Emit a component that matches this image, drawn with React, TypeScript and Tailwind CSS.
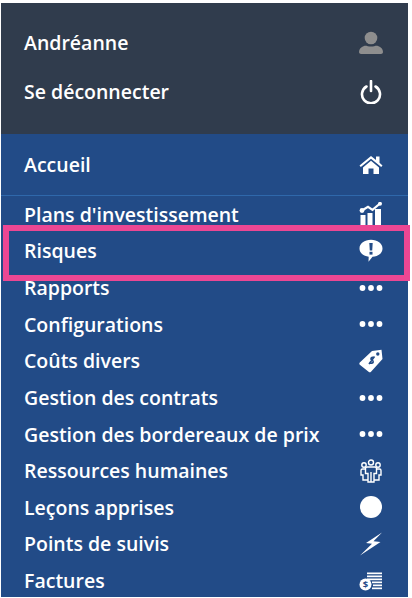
import type { ReactNode } from "react";

const Svg = ({ children }: { children: ReactNode }) => (
  <svg viewBox="0 0 24 24" className="w-6 h-6 shrink-0 text-white" fill="currentColor">
    {children}
  </svg>
);

const Dots = () => (
  <Svg>
    <circle cx="3.500" cy="12" r="2.900" />
    <circle cx="12" cy="12" r="2.900" />
    <circle cx="20.500" cy="12" r="2.900" />
  </Svg>
);

const UserIcon = () => (
  <svg viewBox="0 0 24 24" className="w-6 h-6 shrink-0 text-[#8e8e8e]" fill="currentColor">
    <circle cx="12" cy="7" r="6.300" />
    <path d="M0 21c0-3 2-5 5-6 2-.6 4 .6 7 .6s5-1.200 7-.6c3 1 5 3 5 6 0 1-1 2-2 2H2c-1 0-2-1-2-2z" />
  </svg>
);

const PowerIcon = () => (
  <Svg>
    <path d="M7.500 6.500a9 9 0 1 0 9 0" fill="none" stroke="currentColor" strokeWidth="2.600" strokeLinecap="round" />
    <path d="M12 1v10" fill="none" stroke="currentColor" strokeWidth="2.600" strokeLinecap="round" />
  </Svg>
);

const HomeIcon = () => (
  <Svg>
    <path d="M.5 12.500 12 3l5 4V3.500h3.500v6.300l3 2.700-1.300 1.500L12 5.700 1.800 14z" />
    <path d="M4 14.500 12 7.800l8 6.700V21h-5.500v-5.500h-5V21H4z" />
  </Svg>
);

const ChartIcon = () => (
  <Svg>
    <path d="M3 8.500 9 4.800l4.500 3L21 1.500" fill="none" stroke="currentColor" strokeWidth="2.200" />
    <circle cx="3" cy="8.500" r="2.400" />
    <circle cx="21" cy="1.800" r="2" />
    <rect x="1.500" y="13" width="5" height="11" />
    <rect x="8.500" y="11" width="5" height="13" />
    <rect x="16" y="7" width="6" height="17" />
  </Svg>
);

const RiskIcon = () => (
  <Svg>
    <path d="M12 .8c6.500 0 11.500 3.600 11.500 8.600 0 4.800-4.500 8.200-10 8.400L9.500 22.800l.2-5.100C4.200 17 .5 13.700.5 9.400.5 4.400 5.500.8 12 .8z" />
    <path d="M10.300 4h3.400l-.5 7.500h-2.400z" fill="#224b87" />
    <rect x="10.500" y="12.800" width="3" height="2.800" fill="#224b87" />
  </Svg>
);

const TagIcon = () => (
  <Svg>
    <path d="M.8 13.400 13 2l9.500-1.200L23.500 10 12 22.800c-.7.700-1.700.7-2.400 0L.8 15.700c-.6-.7-.6-1.600 0-2.300z" />
    <circle cx="18.800" cy="5" r="1.700" fill="#224b87" />
    <path d="M15 8.800c-1.500-1.100-3.300-.2-3 1.200.3 1.400 2.500 1.300 2.200 3-.3 1.300-2.200 1.600-3.700.5M15.500 7.500l-5.500 7.500" fill="none" stroke="#224b87" strokeWidth="1.600" />
  </Svg>
);

const TeamIcon = () => (
  <Svg>
    <g fill="none" stroke="currentColor" strokeWidth="1.400">
      <circle cx="12" cy="3.500" r="2.500" />
      <circle cx="5" cy="6" r="2.200" />
      <circle cx="19" cy="6" r="2.200" />
      <path d="M8 8h8c1 0 1.500.6 1.500 1.500v5H15v8.500H9v-8.500H6.500v-5C6.500 8.600 7 8 8 8z" />
      <path d="M6 10H3.500C2.500 10 2 10.600 2 11.500V16h2v5h5M18 10h2.500c1 0 1.500.6 1.500 1.500V16h-2v5h-5M12 13v10" />
    </g>
  </Svg>
);

const CircleIcon = () => (
  <Svg>
    <circle cx="12" cy="12" r="11" />
  </Svg>
);

const BoltIcon = () => (
  <Svg>
    <path d="M23 .5 7 11l6 .8L1 23.500 21.500 10l-7-.8z" />
  </Svg>
);

const MoneyIcon = () => (
  <Svg>
    <rect x="8" y="3.500" width="15" height="1.700" />
    <rect x="8" y="6.500" width="15" height="1.700" />
    <rect x="8" y="9.500" width="15" height="1.700" />
    <rect x="13" y="12.500" width="10" height="1.700" />
    <rect x="14" y="15.500" width="9" height="1.700" />
    <rect x="13" y="18.500" width="10" height="1.700" />
    <circle cx="6.500" cy="15.500" r="6" />
    <text x="6.500" y="19" textAnchor="middle" fontSize="9.500" fontWeight="700" fill="#224b87" fontFamily="'Open Sans', sans-serif">$</text>
  </Svg>
);

const menu: { label: string; icon: ReactNode }[] = [
  { label: "Plans d'investissement", icon: <ChartIcon /> },
  { label: "Risques", icon: <RiskIcon /> },
  { label: "Rapports", icon: <Dots /> },
  { label: "Configurations", icon: <Dots /> },
  { label: "Coûts divers", icon: <TagIcon /> },
  { label: "Gestion des contrats", icon: <Dots /> },
  { label: "Gestion des bordereaux de prix", icon: <Dots /> },
  { label: "Ressources humaines", icon: <TeamIcon /> },
  { label: "Leçons apprises", icon: <CircleIcon /> },
  { label: "Points de suivis", icon: <BoltIcon /> },
  { label: "Factures", icon: <MoneyIcon /> },
];

function Row({ label, icon, className }: { label: string; icon: ReactNode; className: string }) {
  return (
    <div className={`flex items-center justify-between pl-[23px] pr-[25px] ${className}`}>
      <span>{label}</span>
      {icon}
    </div>
  );
}

export default function App() {
  return (
    <div className="relative h-[598px] bg-white pt-[3px] pl-px pr-1 font-['Open_Sans',sans-serif] text-[19.5px] font-semibold text-white overflow-hidden">
      <div className="bg-[#303c4d] pt-[15px] pb-[18px]">
        <Row label="Andréanne" icon={<UserIcon />} className="h-[49px]" />
        <Row label="Se déconnecter" icon={<PowerIcon />} className="h-[49px]" />
      </div>
      <div className="bg-[#224b87] h-[463px]">
        <Row label="Accueil" icon={<HomeIcon />} className="h-[62px] border-b border-[#2f68ab]" />
        <div className="flex flex-col">
          {menu.map((m) => (
            <Row key={m.label} label={m.label} icon={m.icon} className="h-[36.65px]" />
          ))}
        </div>
      </div>
      {/* annotation drawn over the menu */}
      <div className="absolute left-[3px] top-[225px] w-[407px] h-[56px] border-[6px] border-[#ec4793]" />
    </div>
  );
}
